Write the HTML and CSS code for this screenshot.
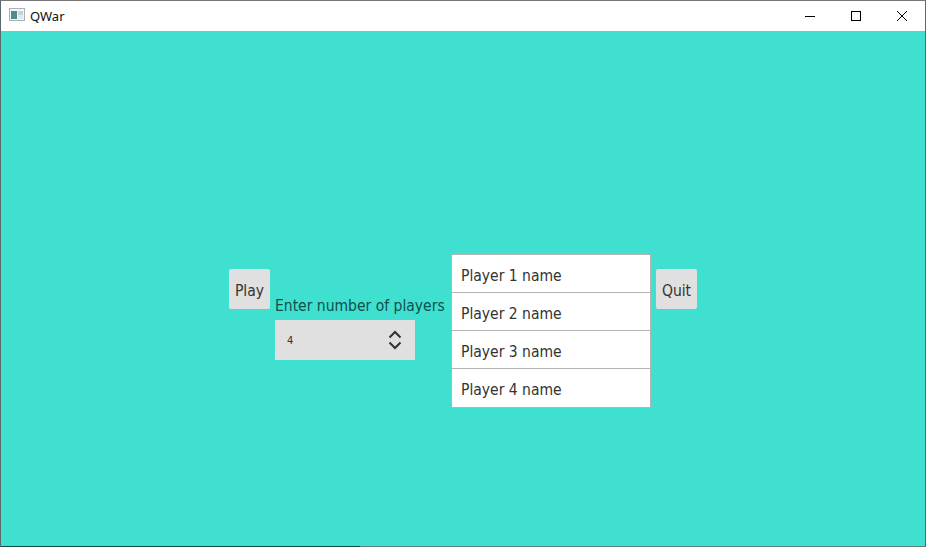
FILE: index.html
```html
<!DOCTYPE html>
<html lang="en">
<head>
<meta charset="utf-8">
<title>QWar</title>
<link rel="stylesheet" href="styles.css">
</head>
<body>
<div class="window">
  <header class="titlebar">
    <svg class="app-icon" width="16" height="16" viewBox="0 0 16 16">
      <rect x="0.5" y="1.5" width="15" height="12" fill="#f2f5f5" stroke="#a9b2b5"/>
      <rect x="2" y="4" width="6" height="8" fill="#4f8c8c"/>
      <rect x="9" y="4" width="5" height="4" fill="#c9d3d6"/>
      <rect x="9" y="8" width="5" height="4" fill="#e3e8ea"/>
    </svg>
    <span class="app-title">QWar</span>
    <div class="win-controls">
      <span class="win-btn"><svg width="12" height="12" viewBox="0 0 12 12"><path d="M1 6.5H11" stroke="#000" fill="none"/></svg></span>
      <span class="win-btn"><svg width="12" height="12" viewBox="0 0 12 12"><rect x="1.5" y="1.5" width="9" height="9" stroke="#000" fill="none"/></svg></span>
      <span class="win-btn"><svg width="12" height="12" viewBox="0 0 12 12"><path d="M1 1L11 11M11 1L1 11" stroke="#000" fill="none"/></svg></span>
    </div>
  </header>
  <main class="content">
    <button class="btn">Play</button>
    <div class="players-count">
      <label class="count-label">Enter number of players</label>
      <div class="spinbox">
        <span class="spin-value">4</span>
        <svg class="spin-arrows" width="16" height="22" viewBox="0 0 16 22">
          <path d="M2.5 8.5L8 3L13.5 8.5M2.5 13.5L8 19L13.5 13.5" stroke="#333" stroke-width="2" fill="none"/>
        </svg>
      </div>
    </div>
    <ul class="names">
      <li class="name">Player 1 name</li>
      <li class="name">Player 2 name</li>
      <li class="name">Player 3 name</li>
      <li class="name">Player 4 name</li>
    </ul>
    <button class="btn">Quit</button>
  </main>
  <div class="bottom-edge"></div>
</div>
</body>
</html>
```
FILE: styles.css
```css
* { box-sizing: border-box; }
html, body { margin: 0; height: 100%; overflow: hidden; }
body { font-family: "DejaVu Sans Condensed", "DejaVu Sans", sans-serif; font-stretch: condensed; font-size: 15.5px; color: #333; }
.window {
  width: 926px; height: 547px;
  display: flex; flex-direction: column;
  border: 1px solid #5a6a6a;
  border-top-color: #777;
  border-bottom: none;
  background: #40e0d0;
}
.titlebar {
  height: 30px; flex: none;
  background: #fff;
  display: flex; align-items: center;
  padding-left: 8px;
}
.app-icon { flex: none; margin-top: -2px; }
.app-title { margin-left: 5px; font-size: 13px; color: #111; font-family: "Noto Sans", sans-serif; font-stretch: normal; }
.win-controls { margin-left: auto; display: flex; }
.win-btn { width: 46px; height: 30px; display: flex; align-items: center; justify-content: center; }
.content {
  flex: 1;
  display: flex; justify-content: center; align-items: flex-start;
  gap: 5px;
  padding-top: 223px;
}
.bottom-edge {
  height: 1px; flex: none;
  background: linear-gradient(to right, #0f4a44 359px, #5f7f7c 359px);
}
.btn {
  margin: 15px 0 0;
  width: 41px; height: 40px; padding: 3px 0 0;
  border: none; border-radius: 2px;
  background: #e0e0e0; color: #333;
  font: inherit;
}
.players-count { width: 170px; margin-top: 41px; margin-right: 1px; display: flex; flex-direction: column; gap: 3px; }
.count-label { color: #0f4f4c; line-height: 22px; white-space: nowrap; }
.spinbox {
  width: 140px; height: 40px;
  background: #e0e0e0;
  display: flex; align-items: center; justify-content: space-between;
  padding: 0 12px;
  font-size: 11px;
}
.names {
  list-style: none; margin: 0; padding: 0;
  width: 200px;
  border: 1px solid #b4b4b4;
  background: #fff;
}
.name {
  height: 38px; line-height: 42px;
  padding-left: 9px;
  border-bottom: 1px solid #b4b4b4;
}
.name:last-child { border-bottom: none; }
```
